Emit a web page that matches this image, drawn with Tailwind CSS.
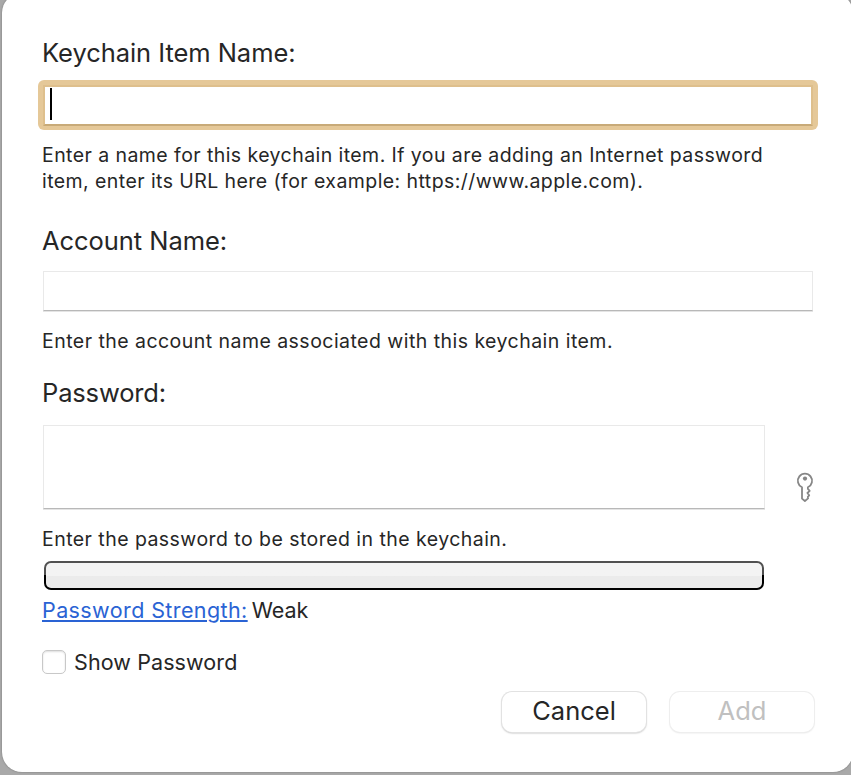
<!DOCTYPE html>
<html lang="en">
<head>
    <meta charset="UTF-8">
    <meta name="viewport" content="width=device-width, initial-scale=1.0">
    <title>Keychain Access</title>
    <script src="https://cdn.jsdelivr.net/npm/@tailwindcss/browser@4"></script>
</head>
<body class="h-[775px] w-[851px] overflow-hidden bg-[#a9a9a9] font-['Inter',sans-serif] text-[#262626]">
    <form class="-mt-[7px] ml-[2px] flex h-[779px] w-[851px] flex-col rounded-[20px] bg-white pt-[43px] pr-[36px] pl-[40px] shadow-[0_0_2px_#707070]">

        <!-- Item name -->
        <label for="item-name" class="block h-[34px] text-[25.5px] leading-[34px] tracking-[-0.05px] whitespace-nowrap">Keychain Item Name:</label>
        <div class="mt-[10px] -ml-[4px] flex h-[50px] w-[780px] rounded-[6px] bg-[#e5c898] px-[5px] pt-[5px] pb-[4px]">
            <div class="flex grow items-start border-2 border-[#debf8c] border-b-[#c8aa78] bg-white pt-px pl-[5px]">
                <span class="h-[32px] w-[2px] bg-black"></span>
                <input id="item-name" type="text" class="h-full min-w-0 grow outline-none">
            </div>
        </div>
        <p class="mt-[12px] h-[52px] text-[19.5px] leading-[26px] tracking-[0.43px] whitespace-nowrap">Enter a name for this keychain item. If you are adding an Internet password<br>item, enter its URL here (for example: https://www.apple.com).</p>

        <!-- Account -->
        <label for="account" class="mt-[30px] block h-[34px] text-[25.5px] leading-[34px] tracking-[-0.05px] whitespace-nowrap">Account Name:</label>
        <input id="account" type="text" class="mt-[13px] mb-px ml-px h-[40px] w-[770px] border border-[#e9e9e9] border-b-[#b8b8b8] bg-white shadow-[0_1px_0_#e4e4e4] outline-none">
        <p class="mt-[16px] h-[26px] text-[19.5px] leading-[26px] tracking-[0.46px] whitespace-nowrap">Enter the account name associated with this keychain item.</p>

        <!-- Password -->
        <label for="password" class="mt-[22px] block h-[34px] text-[25.5px] leading-[34px] tracking-[-0.15px] whitespace-nowrap">Password:</label>
        <div class="mt-[15px] ml-px flex h-[85px] items-start">
            <input id="password" type="password" class="h-[84px] w-[722px] border border-[#e9e9e9] border-b-[#b8b8b8] bg-white shadow-[0_1px_0_#e4e4e4] outline-none">
            <button type="button" aria-label="Password Assistant" class="mt-[46px] ml-[31px]">
                <svg class="block h-[32px] w-[18px]" viewBox="0 0 18 32" fill="none" stroke="#868686" stroke-width="1.8" stroke-linejoin="round">
                    <path d="M6 16.2A7.1 7.1 0 1 1 11.9 16.2L11.9 17.9L13.7 19.8L11.4 22L13.2 24.3L11.8 25.8L12.1 27.4L8.9 30L6 27.6Z"/>
                    <circle cx="9" cy="7.6" r="2.1" fill="#868686" stroke="none"/>
                </svg>
            </button>
        </div>
        <p class="mt-[16px] h-[26px] text-[19.5px] leading-[26px] tracking-[0.45px] whitespace-nowrap">Enter the password to be stored in the keychain.</p>

        <!-- Strength meter -->
        <div class="mt-[9px] ml-[2px] h-[29px] w-[720px] rounded-[7px] bg-linear-to-b from-[#505050] from-50% to-black to-50% p-[2px]">
            <div class="h-full rounded-[5px] bg-linear-to-b from-[#f3f3f3] from-50% to-[#ebebeb] to-50%"></div>
        </div>
        <div class="mt-[5px] flex h-[30px] text-[21.5px] leading-[30px] whitespace-nowrap">
            <a href="#" class="tracking-[0.4px] text-[#2a63d4] underline decoration-2 underline-offset-[2px]">Password Strength:</a>
            <span class="ml-[4px]">Weak</span>
        </div>

        <label class="mt-[22px] flex h-[30px] items-center text-[21.5px] leading-[30px] whitespace-nowrap">
            <input type="checkbox" class="mr-[8px] size-[24px] appearance-none rounded-[5px] border border-[#c8c8c8] bg-white shadow-[inset_0_1px_2px_#dedede]">
            <span class="tracking-[0.1px]">Show Password</span>
        </label>

        <div class="mt-[15px] flex gap-[24px] pl-[460px] text-[25.5px] leading-[38px]">
            <button type="button" class="h-[40px] w-[144px] rounded-[10px] bg-white pb-[2px] shadow-[0_0_0_1px_#e2e2e2,0_1px_2px_#999]">Cancel</button>
            <button type="submit" disabled class="h-[40px] w-[144px] rounded-[10px] bg-white pb-[2px] text-[#c0c0c0] shadow-[0_0_0_1px_#eeeeee,0_1px_2px_#ddd]">Add</button>
        </div>
    </form>
</body>
</html>
